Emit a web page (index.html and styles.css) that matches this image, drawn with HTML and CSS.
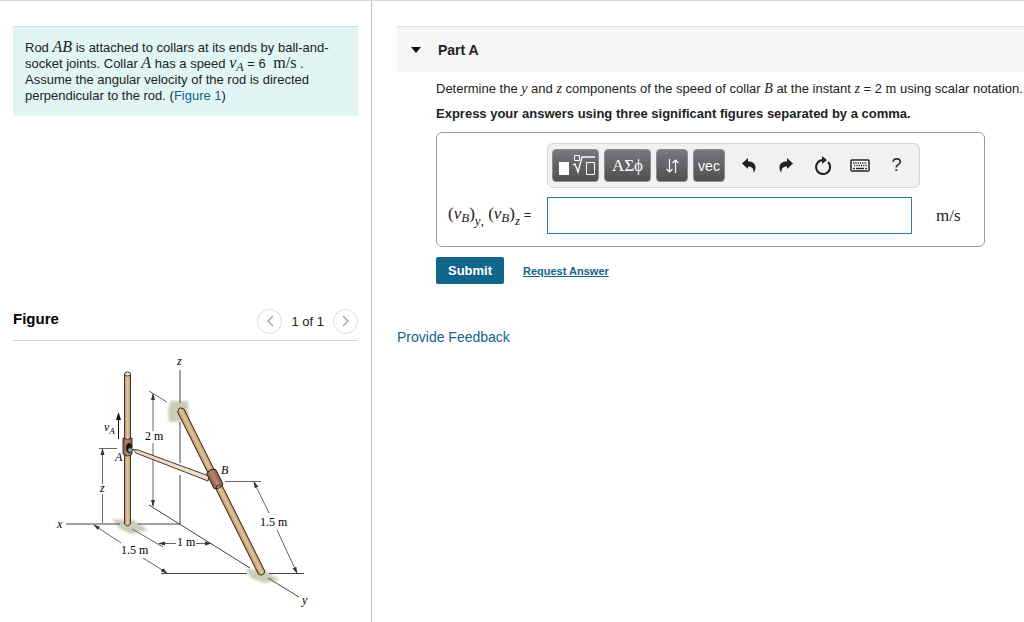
FILE: index.html
```html
<!DOCTYPE html>
<html lang="en">
<head>
    <meta charset="UTF-8">
    <meta name="viewport" content="width=device-width, initial-scale=1.0">
    <title>Part A</title>
    <link rel="stylesheet" href="styles.css">
</head>
<body>
    <div class="page">
        <aside class="left-pane">
            <p class="problem">
                Rod <i class="math">AB</i> is attached to collars at its ends by ball-and-socket joints.
                Collar <i class="math">A</i> has a speed <i class="math">v<sub>A</sub></i> = 6 <span class="math unit">m/s</span> .
                Assume the angular velocity of the rod is directed perpendicular to the rod.
                (<a href="#figure">Figure 1</a>)
            </p>

            <section class="figure" id="figure">
                <div class="figure-header">
                    <h2>Figure</h2>
                    <div class="pager">
                        <button class="round" aria-label="Previous figure">
                            <svg width="8" height="12" viewBox="0 0 8 12"><path d="M7 1L2 6l5 5"/></svg>
                        </button>
                        <span>1 of 1</span>
                        <button class="round" aria-label="Next figure">
                            <svg width="8" height="12" viewBox="0 0 8 12"><path d="M1 1l5 5-5 5"/></svg>
                        </button>
                    </div>
                </div>

                <svg class="diagram" width="290" height="260" viewBox="0 0 290 260" role="img" aria-label="Rod AB between two fixed rods">
                    <defs>
                        <linearGradient id="wood">
                            <stop offset="0" stop-color="#b98f60"/>
                            <stop offset="0.5" stop-color="#e3c59c"/>
                            <stop offset="1" stop-color="#c29a6b"/>
                        </linearGradient>
                        <linearGradient id="brown">
                            <stop offset="0" stop-color="#8d5a48"/>
                            <stop offset="0.5" stop-color="#b98472"/>
                            <stop offset="1" stop-color="#8d5a48"/>
                        </linearGradient>
                        <filter id="soft"><feGaussianBlur stdDeviation="1"/></filter>
                        <marker id="arrow" markerUnits="userSpaceOnUse" markerWidth="8" markerHeight="6" refX="6" refY="3" orient="auto-start-reverse">
                            <path d="M0 1l7 2-7 2z" fill="#333"/>
                        </marker>
                        <marker id="arrow-big" markerUnits="userSpaceOnUse" markerWidth="8" markerHeight="6" refX="6" refY="3" orient="auto">
                            <path d="M0 .5l8 2.5-8 2.5z" fill="#111"/>
                        </marker>
                    </defs>

                    <!-- wall and floor patches -->
                    <g fill="#cccdb8" filter="url(#soft)">
                        <path d="M130 51l18 0 1 20-20 1-1-10z"/>
                        <path d="M72 169l22 1 14 10-17 4-11-5z"/>
                        <path d="M206 219l18 1 16 10-16 3-13-5z"/>
                    </g>

                    <!-- axes -->
                    <g class="axis">
                        <path d="M140 20v33M140 72v41M140 125v49"/>
                        <path d="M26 174h54M98 174h42"/>
                        <path d="M109 155l101 63M228 228l31 19"/>
                        <path d="M121 223.500h86M229 223.500h35"/>
                    </g>

                    <!-- dimension lines -->
                    <g class="dim">
                        <path d="M109 41l18 11M59 98.500h18M92 179l31 18M185 131.500h36"/>
                        <path d="M113 81V44" marker-end="url(#arrow)"/>
                        <path d="M113 93v63" marker-end="url(#arrow)"/>
                        <path d="M62.500 134V99" marker-end="url(#arrow)"/>
                        <path d="M62.500 144v29"/>
                        <path d="M81 193L54 175" marker-end="url(#arrow)"/>
                        <path d="M103 208l24 15" marker-end="url(#arrow)"/>
                        <path d="M136 193.500H119" marker-end="url(#arrow)"/>
                        <path d="M156 193.500h15" marker-end="url(#arrow)"/>
                        <path d="M229 163l-15-31" marker-end="url(#arrow)"/>
                        <path d="M237 180l20 43" marker-end="url(#arrow)"/>
                        <path class="velocity" d="M78.500 89V64" marker-end="url(#arrow-big)"/>
                    </g>

                    <!-- vertical rod with collar A -->
                    <path class="part" d="M84.500 24v150q3 4 6 0V24z" fill="url(#wood)"/>
                    <ellipse class="part" cx="87.500" cy="24" rx="3" ry="2" fill="#f5e6cf"/>
                    <path class="part" d="M83 88v16q4.500 4 9 0V88q-4.500 3-9 0z" fill="url(#brown)"/>
                    <ellipse cx="89" cy="98" rx="3" ry="5" fill="#181818"/>

                    <!-- slanted rod with collar B -->
                    <g transform="translate(140.500 60) rotate(-26.500)">
                        <path class="part" d="M-3.500 1q3.500-6 7 0v181q-3.500 4-7 0z" fill="url(#wood)"/>
                    </g>
                    <path class="part" d="M93 99.500l5 .5 71 26-1 5-72-28z" fill="#f1dcc8"/>
                    <circle cx="90" cy="100" r="2.200" fill="#6fb3d6" stroke="#222" stroke-width=".6"/>
                    <g transform="translate(140.500 60) rotate(-26.500)">
                        <path class="part" d="M-5 69q5-4 10 0v16q-5 4-10 0z" fill="url(#brown)"/>
                        <path class="part" d="M-3.500 86q3.500-4 7 0" fill="none"/>
                    </g>

                    <g class="labels">
                        <text class="it" x="137" y="15">z</text>
                        <text class="it" x="17" y="178">x</text>
                        <text class="it" x="262" y="254">y</text>
                        <text class="it" x="60" y="142">z</text>
                        <text class="it" x="64" y="81">v<tspan class="small" dy="3">A</tspan></text>
                        <text class="it" x="75" y="111">A</text>
                        <text class="it" x="181" y="124">B</text>
                        <text x="105" y="90">2 m</text>
                        <text x="81" y="204">1.5 m</text>
                        <text x="137" y="196">1 m</text>
                        <text x="220" y="176">1.5 m</text>
                    </g>
                </svg>
            </section>
        </aside>

        <main class="right-pane">
            <header class="part-header">
                <span class="caret"></span>
                <h1>Part A</h1>
            </header>

            <div class="part-body">
                <p class="question">Determine the <i class="math">y</i> and <i class="math">z</i> components of the speed of collar <i class="math">B</i> at the instant <i class="math">z</i> = 2 <span class="math">m</span> using scalar notation.</p>
                <p><b>Express your answers using three significant figures separated by a comma.</b></p>

                <form class="answer-box">
                    <div class="toolbar">
                        <button type="button" class="tool wide" aria-label="Templates">
                            <svg width="38" height="24" viewBox="0 0 38 24">
                                <path d="M2 8h10v13H2z" fill="#fff"/>
                                <path d="M17.500 1.500h5v5h-5zM29.500 8.500h8v12h-8z" fill="none" stroke="#fff"/>
                                <path d="M16 11l2-1 3 8 4-15h13" fill="none" stroke="#fff" stroke-width="1.300"/>
                            </svg>
                        </button>
                        <button type="button" class="tool wide greek">ΑΣϕ</button>
                        <button type="button" class="tool" aria-label="Subscript and superscript">
                            <svg width="14" height="16" viewBox="0 0 14 16">
                                <path d="M4.500 1v13M1.500 11l3 3 3-3M10.500 15V2M7.500 5l3-3 3 3" fill="none" stroke="#fff" stroke-width="1.200"/>
                            </svg>
                        </button>
                        <button type="button" class="tool">vec</button>
                        <div class="icons">
                            <button type="button" class="icon" aria-label="Undo">
                                <svg width="14" height="16" viewBox="0 0 14 16"><path d="M0 5.500L6 0v3.300c5 0 8 3 7.500 7-.2 2-1 3.700-2 4.700.8-4-1.500-6.600-5.500-6.600V11z"/></svg>
                            </button>
                            <button type="button" class="icon" aria-label="Redo">
                                <svg width="14" height="16" viewBox="0 0 14 16"><path d="M14 5.500L8 0v3.300c-5 0-8 3-7.500 7 .2 2 1 3.700 2 4.700-.8-4 1.500-6.600 5.500-6.600V11z"/></svg>
                            </button>
                            <button type="button" class="icon" aria-label="Reset">
                                <svg width="18" height="20" viewBox="0 0 18 20"><path d="M9 4a7 7 0 1 0 5 2" fill="none" stroke="#222" stroke-width="2"/><path d="M8 0l5 4-5 4z"/></svg>
                            </button>
                            <button type="button" class="icon" aria-label="Keyboard">
                                <svg width="20" height="13" viewBox="0 0 20 13">
                                    <rect x="1" y="1" width="18" height="11" rx="1" fill="#fff" stroke="#222" stroke-width="1.500"/>
                                    <path d="M3 4h14M4 6.500h13" stroke="#222" stroke-width="1.300" stroke-dasharray="1.300 1"/>
                                    <path d="M3 9.500h2M6 9.500h8M15 9.500h2" stroke="#222" stroke-width="1.300"/>
                                </svg>
                            </button>
                            <button type="button" class="icon help">?</button>
                        </div>
                    </div>

                    <label for="answer"><span class="math">(<i>v<sub>B</sub></i>)<sub class="low"><i>y</i>,</sub> (<i>v<sub>B</sub></i>)<sub class="low"><i>z</i></sub></span> =</label>
                    <input type="text" id="answer">
                    <span class="math answer-unit">m/s</span>
                </form>

                <div class="actions">
                    <button class="submit">Submit</button>
                    <a href="#">Request Answer</a>
                </div>
            </div>

            <a class="feedback" href="#">Provide Feedback</a>
        </main>
    </div>
</body>
</html>
```
FILE: styles.css
```css
* {
    box-sizing: border-box;
}
body {
    margin: 0;
    font-family: "Liberation Sans", Arial, sans-serif;
    font-size: 13px;
    color: #222;
    background: #fff;
}
h1, h2, p {
    margin: 0;
}
a {
    color: #11648a;
}
button {
    padding: 0;
    font-family: inherit;
    cursor: pointer;
}
.page {
    display: flex;
    min-height: 100vh;
    border-top: 1px solid #d6d6d6;
}

/* left side */
.left-pane {
    flex: 0 0 372px;
    padding: 25px 13px 0;
    border-right: 1px solid #b4bfcf;
}
.problem {
    padding: 13px 12px 12px;
    border-top: 1px solid #d3dcdc;
    background: #e1f5f4;
    line-height: 16px;
}
.problem a {
    text-decoration: none;
}
.math {
    font-family: "Liberation Serif", "Times New Roman", serif;
    font-size: 16px;
    line-height: 14px;
}
.math sub {
    font-size: 12px;
    line-height: 8px;
    vertical-align: -3px;
}
.unit {
    margin-left: 4px;
}
.figure {
    margin-top: 190px;
}
.figure-header {
    display: flex;
    justify-content: space-between;
    align-items: center;
    height: 35px;
    border-bottom: 1px solid #d3d3d3;
}
.figure-header h2 {
    padding-bottom: 10px;
    font-size: 15px;
    color: #000;
}
.pager {
    display: flex;
    align-items: center;
    gap: 9px;
    padding-bottom: 4px;
}
.round {
    display: flex;
    align-items: center;
    justify-content: center;
    width: 25px;
    height: 25px;
    border: 1px solid #ddd;
    border-radius: 50%;
    background: #fff;
}
.round path {
    fill: none;
    stroke: #aaa;
    stroke-width: 1.5;
}
.diagram {
    display: block;
    margin: 9px 0 0 27px;
}
.axis {
    fill: none;
    stroke: #444;
}
.dim {
    fill: none;
    stroke: #666;
}
.velocity {
    stroke: #111;
}
.part {
    stroke: #30251c;
    stroke-width: 0.9;
}
.labels {
    font-family: "Liberation Serif", "Times New Roman", serif;
    font-size: 12px;
    fill: #000;
}
.it {
    font-style: italic;
}
.small {
    font-size: 9px;
}

/* right side */
.right-pane {
    flex: 1;
    min-width: 0;
    padding: 25px 0 0 25px;
}
.part-header {
    display: flex;
    align-items: center;
    gap: 17px;
    height: 46px;
    padding-left: 14px;
    border-top: 1px solid #dcdcdc;
    background: #f6f6f6;
}
.part-header h1 {
    font-size: 14px;
}
.caret {
    border: 5px solid transparent;
    border-top: 6px solid #111;
    border-bottom: 0;
}
.part-body {
    padding-left: 39px;
}
.part-body p {
    margin-top: 9px;
    line-height: 16px;
}
.question .math {
    font-size: 14px;
}
.answer-box {
    display: grid;
    grid-template-columns: 110px minmax(0, 1fr) 72px;
    row-gap: 9px;
    align-items: center;
    margin: 10px 39px 0 0;
    padding: 10px 0 12px;
    border: 1px solid #999;
    border-radius: 6px;
}
.toolbar {
    grid-column: 2 / 4;
    justify-self: start;
    display: flex;
    gap: 5px;
    height: 45px;
    padding: 5px 4px;
    border: 1px solid #d6d6d6;
    border-radius: 6px;
    background: #f1f1f1;
}
.tool {
    display: flex;
    align-items: center;
    justify-content: center;
    width: 32px;
    height: 33px;
    border: 1px solid #8b8b93;
    border-radius: 4px;
    background: linear-gradient(#77777c, #505052);
    color: #fff;
    font-size: 14px;
}
.wide {
    width: 47px;
}
.greek {
    font-family: "Liberation Serif", "Times New Roman", serif;
    font-size: 17px;
}
.icons {
    display: flex;
}
.icon {
    display: flex;
    align-items: center;
    justify-content: center;
    width: 37px;
    height: 33px;
    border: 0;
    background: none;
    color: #222;
    fill: #222;
}
.help {
    font-size: 18px;
}
.answer-box label {
    padding-left: 11px;
    white-space: nowrap;
}
.answer-box .math {
    font-size: 17px;
}
.answer-box .math sub {
    font-size: 13px;
}
.math .low {
    vertical-align: -6px;
}
.answer-box input {
    width: 100%;
    height: 37px;
    padding: 0 8px;
    border: 1px solid #2a7da5;
    font-size: 16px;
}
.answer-unit {
    padding-left: 24px;
}
.actions {
    display: flex;
    align-items: center;
    gap: 19px;
    margin-top: 10px;
}
.actions a {
    font-size: 11px;
    font-weight: bold;
}
.submit {
    width: 68px;
    height: 27px;
    border: 0;
    border-radius: 2px;
    background: #11658a;
    color: #fff;
    font-size: 13px;
    font-weight: bold;
}
.feedback {
    display: inline-block;
    margin-top: 45px;
    font-size: 14px;
    text-decoration: none;
}
```
